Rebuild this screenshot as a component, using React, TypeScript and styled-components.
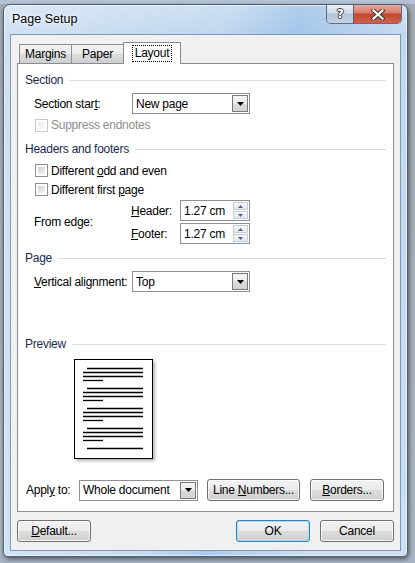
import React from 'react';
import styled, { createGlobalStyle } from 'styled-components';

const GlobalStyle = createGlobalStyle`
  html, body {
    margin: 0;
    padding: 0;
  }
  body {
    width: 415px;
    height: 563px;
    overflow: hidden;
    font-family: "Segoe UI", "Liberation Sans", Arial, sans-serif;
    font-size: 12px;
    letter-spacing: -0.25px;
    color: #000;
  }
`;

const Desktop = styled.div`
  width: 415px;
  height: 563px;
  box-sizing: border-box;
  padding: 4px 7px 6px 3px;
  background: linear-gradient(to bottom, #b5c4d6 0, #b5c4d6 4px, #a4acb5 4px, #aab6c4 100%);
`;

const Window = styled.div`
  width: 405px;
  height: 553px;
  box-sizing: border-box;
  border: 1px solid #4f5e71;
  border-radius: 7px 7px 5px 5px;
  background:
    linear-gradient(100deg, rgba(255, 255, 255, 0.35) 0%, rgba(255, 255, 255, 0.1) 45%, rgba(120, 170, 225, 0.3) 60%, rgba(255, 255, 255, 0.15) 80%),
    linear-gradient(to bottom, #c8dcf1 0, #b7d1ec 30px, #c1daf4 100%);
  box-shadow: 1px 2px 5px rgba(0, 0, 0, 0.55), inset 0 0 0 1px rgba(255, 255, 255, 0.55);
  display: flex;
  flex-direction: column;
  padding: 0 6px 5px 6px;
`;

const TitleBar = styled.div`
  height: 29px;
  display: flex;
  align-items: flex-start;
`;

const Title = styled.div`
  padding: 7px 0 0 2px;
  line-height: 15px;
  font-size: 12.5px;
  letter-spacing: 0;
  text-shadow: 0 0 6px #fff, 0 0 3px #fff;
`;

const CaptionButtons = styled.div`
  margin-left: auto;
  margin-right: -1px;
  display: flex;
  height: 18px;
  border: 1px solid #5d6d82;
  border-top: none;
  border-radius: 0 0 5px 5px;
  overflow: hidden;
`;

const CaptionButton = styled.div<{ $close?: boolean }>`
  width: ${p => (p.$close ? 47 : 26)}px;
  height: 18px;
  display: flex;
  align-items: center;
  justify-content: center;
  font-family: "DejaVu Sans", sans-serif;
  font-weight: bold;
  font-size: 12px;
  color: #fff;
  text-shadow: -1px 0 #3c3c3c, 1px 0 #3c3c3c, 0 -1px #3c3c3c, 0 1px #3c3c3c;
  border-left: ${p => (p.$close ? '1px solid #6d5a5a' : 'none')};
  background: ${p =>
    p.$close
      ? 'linear-gradient(to bottom, #e9a99b 0%, #d67a68 45%, #c4452f 50%, #d2614c 100%)'
      : 'linear-gradient(to bottom, #e9eff6 0%, #cfdbe8 45%, #b4c3d5 50%, #c4d3e3 100%)'};
`;

const Client = styled.div`
  flex: 1;
  background: #f0f0f0;
  border: 1px solid #8397b0;
  padding: 7px 6px 0 6px;
  display: flex;
  flex-direction: column;
`;

const Tabs = styled.div`
  display: flex;
  align-items: flex-start;
  height: 21px;
  padding-left: 2px;
`;

const Tab = styled.div<{ $active?: boolean; $w: number }>`
  position: relative;
  z-index: ${p => (p.$active ? 2 : 1)};
  width: ${p => p.$w}px;
  height: ${p => (p.$active ? 22 : 19)}px;
  margin-top: ${p => (p.$active ? 0 : 2)}px;
  margin-left: -1px;
  box-sizing: border-box;
  border: 1px solid #898c95;
  border-bottom: none;
  display: flex;
  align-items: center;
  justify-content: center;
  background: ${p =>
    p.$active ? '#fff' : 'linear-gradient(to bottom, #f3f3f3 0%, #ebebeb 50%, #dddddd 50%, #cfcfcf 100%)'};
  &:first-child {
    margin-left: 0;
  }
`;

const FocusText = styled.span`
  padding: 0 2px 1px 2px;
  outline: 1px dotted #000;
  outline-offset: 0;
`;

const Panel = styled.div`
  position: relative;
  z-index: 1;
  height: 449px;
  box-sizing: border-box;
  background: #fff;
  border: 1px solid #898c95;
  padding: 0 7px 10px 7px;
  display: flex;
  flex-direction: column;
`;

const Heading = styled.div<{ $mt: number }>`
  display: flex;
  align-items: center;
  height: 16px;
  margin-top: ${p => p.$mt}px;
  color: #1b2a4e;
  white-space: nowrap;
  &::after {
    content: '';
    flex: 1;
    height: 1px;
    margin-left: 6px;
    background: #d5dfe5;
  }
`;

const Row = styled.div<{ $mt?: number; $h: number; $indent?: number }>`
  display: flex;
  align-items: center;
  height: ${p => p.$h}px;
  margin-top: ${p => p.$mt ?? 0}px;
  padding-left: ${p => p.$indent ?? 0}px;
`;

const Label = styled.span<{ $w?: number; $disabled?: boolean }>`
  flex-shrink: 0;
  width: ${p => (p.$w ? `${p.$w}px` : 'auto')};
  color: ${p => (p.$disabled ? '#8d8d8d' : '#000')};
  white-space: nowrap;
`;

const U = styled.span`
  text-decoration: underline;
`;

const CheckBox = styled.span<{ $disabled?: boolean }>`
  flex-shrink: 0;
  width: 13px;
  height: 13px;
  box-sizing: border-box;
  margin-right: 3px;
  border: 1px solid ${p => (p.$disabled ? '#c9c9c9' : '#8e8f8f')};
  padding: 2px;
  background: #fff;
  &::before {
    content: '';
    display: block;
    width: 7px;
    height: 7px;
    background: ${p =>
      p.$disabled
        ? 'linear-gradient(135deg, #ececec, #fafafa)'
        : 'linear-gradient(135deg, #cdd1d6, #f4f5f6)'};
  }
`;

const Combo = styled.div<{ $w: number }>`
  flex-shrink: 0;
  width: ${p => p.$w}px;
  height: 21px;
  box-sizing: border-box;
  border: 1px solid #8f8f8f;
  background: #fff;
  display: flex;
  align-items: center;
  padding: 0 1px 0 3px;
`;

const DropButton = styled.span`
  margin-left: auto;
  width: 16px;
  height: 17px;
  box-sizing: border-box;
  border: 1px solid #7a7a7a;
  background: linear-gradient(to bottom, #f4f4f4 0%, #ececec 50%, #dcdcdc 50%, #d4d4d4 100%);
  display: flex;
  align-items: center;
  justify-content: center;
`;

const EdgeGrid = styled.div`
  display: grid;
  grid-template-columns: 97px 49px 70px;
  grid-template-rows: 21px 21px;
  row-gap: 2px;
  align-items: center;
  margin-top: 1px;
  padding-left: 9px;
`;

const EdgeLabel = styled.span`
  grid-row: 1 / span 2;
  align-self: center;
`;

const Spin = styled.div`
  width: 70px;
  height: 21px;
  box-sizing: border-box;
  border: 1px solid #8f8f8f;
  background: #fff;
  display: flex;
  align-items: center;
  padding: 1px 1px 1px 3px;
`;

const SpinButtons = styled.div`
  margin-left: auto;
  width: 15px;
  height: 17px;
  display: flex;
  flex-direction: column;
`;

const SpinPart = styled.span`
  flex: 1;
  box-sizing: border-box;
  border: 1px solid #c3ccd8;
  background: linear-gradient(to bottom, #f7f9fb, #e3e8ee);
  display: flex;
  align-items: center;
  justify-content: center;
  & + & {
    margin-top: 1px;
  }
`;

const PreviewPage = styled.div`
  margin: 7px 0 0 49px;
  width: 79px;
  height: 100px;
  box-sizing: border-box;
  border: 1px solid #000;
  background: #fff;
  box-shadow: 2px 2px 3px rgba(0, 0, 0, 0.3);
`;

const BottomRow = styled.div`
  margin-top: auto;
  display: flex;
  align-items: center;
  height: 22px;
  padding-left: 1px;
`;

const Button = styled.button<{ $w: number; $default?: boolean; $ml?: number }>`
  flex-shrink: 0;
  width: ${p => p.$w}px;
  height: 22px;
  margin-left: ${p => p.$ml ?? 0}px;
  padding: 0;
  box-sizing: border-box;
  border: 1px solid ${p => (p.$default ? '#3c7fb1' : '#707070')};
  border-radius: 3px;
  font: inherit;
  letter-spacing: inherit;
  color: #000;
  background: linear-gradient(to bottom, #f2f2f2 0%, #ebebeb 50%, #dddddd 50%, #cfcfcf 100%);
  box-shadow: inset 0 0 0 1px ${p => (p.$default ? '#a6dcf5' : 'rgba(255, 255, 255, 0.75)')};
`;

const Footer = styled.div`
  display: flex;
  align-items: center;
  margin-top: 8px;
  height: 22px;
`;

const Spacer = styled.div`
  flex: 1;
`;

const DownArrow = () => (
  <svg width="7" height="4" viewBox="0 0 7 4">
    <path d="M0 0h7L3.5 4z" fill="#000" />
  </svg>
);

const SpinArrow = ({ up }: { up?: boolean }) => (
  <svg width="5" height="3" viewBox="0 0 5 3">
    <path d={up ? 'M0 3h5L2.5 0z' : 'M0 0h5L2.5 3z'} fill="#4d6185" />
  </svg>
);

const CloseGlyph = () => (
  <svg width="14" height="11" viewBox="0 0 14 11">
    <path d="M2.5 1.5l9 8M11.5 1.5l-9 8" stroke="#3a3a3a" strokeWidth="4.2" strokeLinecap="square" />
    <path d="M2.5 1.5l9 8M11.5 1.5l-9 8" stroke="#fff" strokeWidth="2.2" strokeLinecap="square" />
  </svg>
);

const PageLines = () => {
  const groups = [0, 1, 2, 3];
  return (
    <svg width="77" height="98" viewBox="0 0 77 98">
      <g stroke="#000" strokeWidth="1.3">
        {groups.map(g => {
          const y = 8.5 + g * 20;
          return (
            <g key={g}>
              <line x1="12" x2="68" y1={y} y2={y} />
              <line x1="8" x2="68" y1={y + 4} y2={y + 4} />
              <line x1="8" x2="68" y1={y + 8} y2={y + 8} />
              <line x1="8" x2="28" y1={y + 12} y2={y + 12} />
            </g>
          );
        })}
        <line x1="12" x2="68" y1={88.5} y2={88.5} />
      </g>
    </svg>
  );
};

const Combobox = ({ w, value }: { w: number; value: string }) => (
  <Combo $w={w}>
    {value}
    <DropButton>
      <DownArrow />
    </DropButton>
  </Combo>
);

const SpinBox = ({ value }: { value: string }) => (
  <Spin>
    {value}
    <SpinButtons>
      <SpinPart>
        <SpinArrow up />
      </SpinPart>
      <SpinPart>
        <SpinArrow />
      </SpinPart>
    </SpinButtons>
  </Spin>
);

export default function App() {
  return (
    <>
      <GlobalStyle />
      <Desktop>
        <Window>
          <TitleBar>
            <Title>Page Setup</Title>
            <CaptionButtons>
              <CaptionButton>?</CaptionButton>
              <CaptionButton $close>
                <CloseGlyph />
              </CaptionButton>
            </CaptionButtons>
          </TitleBar>
          <Client>
            <Tabs>
              <Tab $w={53}>Margins</Tab>
              <Tab $w={53}>Paper</Tab>
              <Tab $w={58} $active>
                <FocusText>Layout</FocusText>
              </Tab>
            </Tabs>
            <Panel>
              <Heading $mt={8}>Section</Heading>
              <Row $mt={5} $h={21} $indent={9}>
                <Label $w={98}>
                  Section star<U>t</U>:
                </Label>
                <Combobox w={118} value="New page" />
              </Row>
              <Row $mt={3} $h={16} $indent={10}>
                <CheckBox $disabled />
                <Label $disabled>Suppress endnotes</Label>
              </Row>

              <Heading $mt={8}>Headers and footers</Heading>
              <Row $mt={4} $h={19} $indent={10}>
                <CheckBox />
                <Label>
                  Different <U>o</U>dd and even
                </Label>
              </Row>
              <Row $h={19} $indent={10}>
                <CheckBox />
                <Label>
                  Different first <U>p</U>age
                </Label>
              </Row>
              <EdgeGrid>
                <EdgeLabel>From edge:</EdgeLabel>
                <Label>
                  <U>H</U>eader:
                </Label>
                <SpinBox value="1.27 cm" />
                <Label>
                  <U>F</U>ooter:
                </Label>
                <SpinBox value="1.27 cm" />
              </EdgeGrid>

              <Heading $mt={6}>Page</Heading>
              <Row $mt={5} $h={21} $indent={9}>
                <Label $w={98}>
                  <U>V</U>ertical alignment:
                </Label>
                <Combobox w={118} value="Top" />
              </Row>

              <Heading $mt={44}>Preview</Heading>
              <PreviewPage>
                <PageLines />
              </PreviewPage>

              <BottomRow>
                <Label $w={53}>
                  Appl<U>y</U> to:
                </Label>
                <Combobox w={119} value="Whole document" />
                <Button $w={93} $ml={9}>
                  Line <U>N</U>umbers...
                </Button>
                <Button $w={74} $ml={10}>
                  <U>B</U>orders...
                </Button>
              </BottomRow>
            </Panel>
            <Footer>
              <Button $w={74}>
                <U>D</U>efault...
              </Button>
              <Spacer />
              <Button $w={74} $default>
                OK
              </Button>
              <Button $w={74} $ml={10}>
                Cancel
              </Button>
            </Footer>
          </Client>
        </Window>
      </Desktop>
    </>
  );
}
